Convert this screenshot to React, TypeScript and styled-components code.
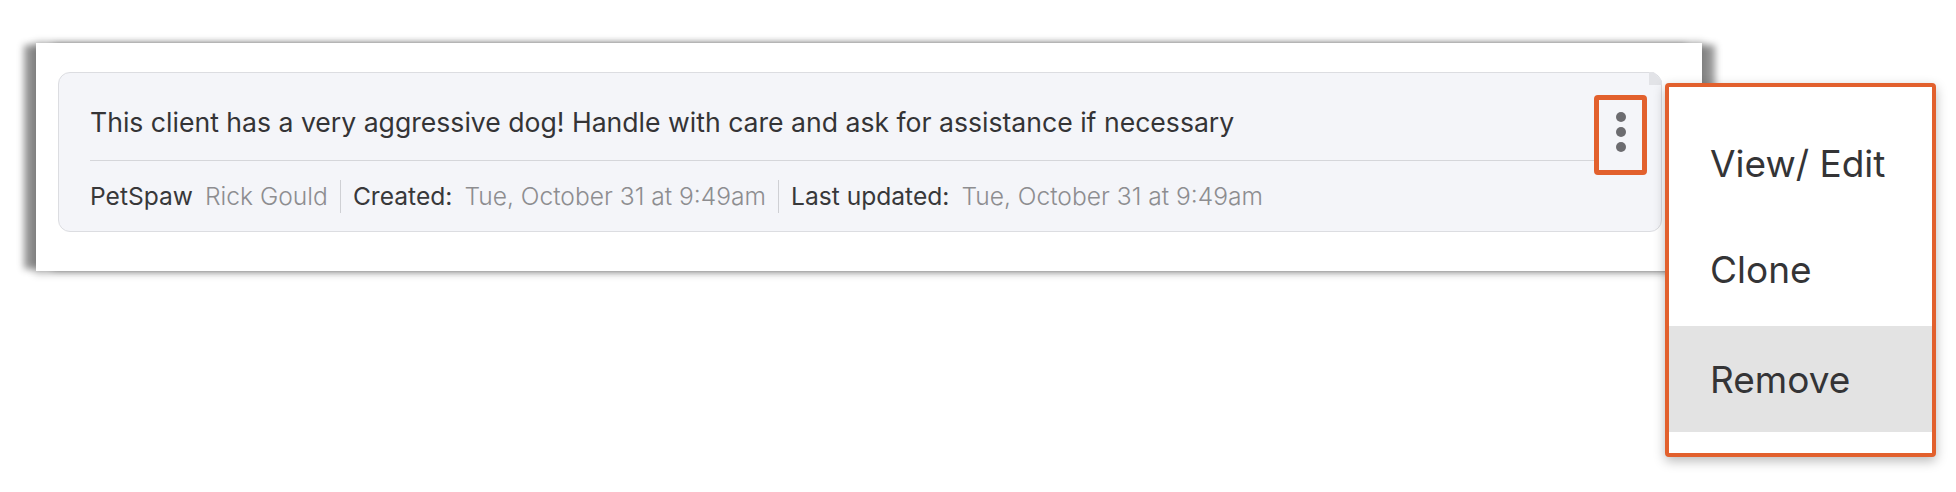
import React from "react";
import styled, { createGlobalStyle } from "styled-components";

const GlobalStyle = createGlobalStyle`
  html, body {
    margin: 0;
    padding: 0;
    background: #ffffff;
  }
  body {
    font-family: "Inter", "Liberation Sans", sans-serif;
    -webkit-font-smoothing: antialiased;
  }
`;

const ORANGE = "#e2602d";

const Stage = styled.div`
  position: relative;
  width: 1956px;
  height: 492px;
  padding: 43px 0 0 36px;
  box-sizing: border-box;
`;

const Panel = styled.section`
  width: 1666px;
  box-sizing: border-box;
  padding: 29px 40px 39px 22px;
  background: #ffffff;
  box-shadow:
    -14px 0 7px -2px rgba(0, 0, 0, 0.42),
    15px 0 7px -2px rgba(0, 0, 0, 0.42),
    0 1px 8px 2px rgba(0, 0, 0, 0.2);
`;

const NoteCard = styled.article`
  position: relative;
  display: grid;
  grid-template-columns: 1fr auto;
  align-items: start;
  box-sizing: border-box;
  padding: 22px 14px 18px 31px;
  background: #f4f5f9;
  border: 1px solid #dcdde1;
  border-radius: 12px;

  &::after {
    content: "";
    position: absolute;
    top: -1px;
    right: -1px;
    width: 13px;
    height: 13px;
    background: #e2e3e7;
    clip-path: polygon(0 0, 35% 0, 100% 70%, 100% 100%, 0 100%);
  }
`;

const NoteBody = styled.div`
  padding-top: 9px;
  min-width: 0;
`;

const NoteText = styled.p`
  margin: 0;
  font-size: 26.6px;
  line-height: 36px;
  font-weight: 400;
  color: #343436;
  white-space: nowrap;
`;

const Divider = styled.hr`
  margin: 20px 0 0;
  border: 0;
  height: 1px;
  background: #d5d6da;
`;

const MetaRow = styled.div`
  display: flex;
  align-items: center;
  height: 34px;
  margin-top: 18px;
`;

const MetaGroup = styled.div`
  display: flex;
  align-items: center;
  gap: 12px;
  font-size: 24.6px;
  line-height: 34px;
  white-space: nowrap;
`;

const MetaLabel = styled.span`
  color: #38383a;
  font-weight: 400;
`;

const MetaValue = styled.span`
  color: #8d8d90;
  font-weight: 300;
`;

const MetaSep = styled.span`
  width: 1px;
  height: 33px;
  margin: 0 12px 0 12px;
  background: #cfd0d4;
`;

const KebabBox = styled.button`
  display: flex;
  flex-direction: column;
  align-items: center;
  gap: 5px;
  width: 53px;
  height: 80px;
  box-sizing: border-box;
  padding: 12px 0 0;
  border: 5px solid ${ORANGE};
  border-radius: 4px;
  background: #f4f5f9;
  cursor: pointer;
`;

const Dot = styled.span`
  width: 10px;
  height: 10px;
  border-radius: 50%;
  background: #6c6c70;
`;

const Menu = styled.ul`
  position: absolute;
  left: 1665px;
  top: 83px;
  width: 271px;
  box-sizing: border-box;
  margin: 0;
  padding: 23px 0 21px;
  list-style: none;
  background: #ffffff;
  border: 4px solid ${ORANGE};
  border-radius: 4px;
  box-shadow: 0 4px 12px rgba(0, 0, 0, 0.28);
`;

const MenuItem = styled.li<{ $active?: boolean }>`
  display: flex;
  align-items: center;
  height: 106px;
  margin-top: ${(p) => (p.$active ? "4px" : "0")};
  padding-left: 41px;
  font-size: 37px;
  font-weight: 400;
  color: #343436;
  background: ${(p) => (p.$active ? "#e3e3e3" : "transparent")};
  white-space: nowrap;
`;

export default function App() {
  return (
    <>
      <GlobalStyle />
      <Stage>
        <Panel>
          <NoteCard>
            <NoteBody>
              <NoteText>
                This client has a very aggressive dog! Handle with care and ask for assistance if necessary
              </NoteText>
              <Divider />
              <MetaRow>
                <MetaGroup>
                  <MetaLabel>PetSpaw</MetaLabel>
                  <MetaValue>Rick Gould</MetaValue>
                </MetaGroup>
                <MetaSep />
                <MetaGroup>
                  <MetaLabel>Created:</MetaLabel>
                  <MetaValue>Tue, October 31 at 9:49am</MetaValue>
                </MetaGroup>
                <MetaSep />
                <MetaGroup>
                  <MetaLabel>Last updated:</MetaLabel>
                  <MetaValue>Tue, October 31 at 9:49am</MetaValue>
                </MetaGroup>
              </MetaRow>
            </NoteBody>
            <KebabBox aria-label="More actions">
              <Dot />
              <Dot />
              <Dot />
            </KebabBox>
          </NoteCard>
        </Panel>
        <Menu>
          <MenuItem>View/ Edit</MenuItem>
          <MenuItem>Clone</MenuItem>
          <MenuItem $active>Remove</MenuItem>
        </Menu>
      </Stage>
    </>
  );
}
